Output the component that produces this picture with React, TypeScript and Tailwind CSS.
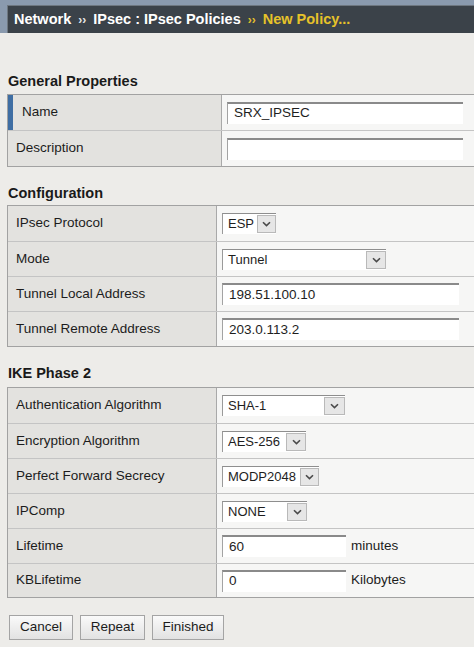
import type { ReactNode } from 'react';

const font = { fontFamily: '"Liberation Sans", Arial, sans-serif' };

function Chevron() {
  return (
    <svg width="9" height="6" viewBox="0 0 9 6" className="block">
      <path d="M1 1.2 L4.5 4.6 L8 1.2" fill="none" stroke="#4a4a4a" strokeWidth="1.6" />
    </svg>
  );
}

function Select({ value, width, arrowLeft }: { value: string; width: number; arrowLeft: number }) {
  return (
    <div
      className="flex h-[21px] bg-white border-t border-l border-t-[#8e8e8e] border-l-[#9a9a9a]"
      style={{ width }}
    >
      <div className="flex items-center pl-[5px] text-[13px] text-[#1e1e1e]" style={{ width: arrowLeft }}>
        {value}
      </div>
      <div className="flex-1 flex items-center justify-center bg-[#e6e6e6] border border-[#b9b9b9] mt-[1px] mb-[1px]">
        <Chevron />
      </div>
    </div>
  );
}

function TextInput({ value, width }: { value: string; width: number }) {
  return (
    <div
      className="flex items-center h-[22px] bg-white border-t-2 border-l border-t-[#8a8a8a] border-l-[#a3a3a3] pl-[6px] text-[13.5px] text-[#1e1e1e]"
      style={{ width }}
    >
      {value}
    </div>
  );
}

function Row({
  label,
  labelWidth,
  height,
  first,
  marker,
  children,
}: {
  label: string;
  labelWidth: number;
  height: number;
  first?: boolean;
  marker?: boolean;
  children: ReactNode;
}) {
  return (
    <div className={`flex ${first ? '' : 'border-t border-[#c4c4c4]'}`} style={{ height }}>
      <div
        className="flex items-center bg-[#e3e2df] border-r border-[#a9a9a9] text-[13.5px] text-[#1c1c1c]"
        style={{ width: labelWidth }}
      >
        {marker ? (
          <>
            <div className="w-[5px] self-stretch bg-[#3f6ea3]" />
            <span className="pl-[9px]">{label}</span>
          </>
        ) : (
          <span className="pl-[8px]">{label}</span>
        )}
      </div>
      <div className="flex-1 flex items-center gap-[5px] pl-[5px] bg-[#f6f6f5]">{children}</div>
    </div>
  );
}

function Heading({ children }: { children: ReactNode }) {
  return <div className="h-[16px] leading-[16px] pl-[1px] text-[14.5px] font-bold text-[#1a1a1a]">{children}</div>;
}

function Button({ children, width }: { children: ReactNode; width: number }) {
  return (
    <button
      className="h-[25px] border border-[#a4a4a4] bg-gradient-to-b from-[#fafafa] to-[#e2e2e2] text-[13.5px] text-[#1c1c1c]"
      style={{ width, ...font }}
    >
      {children}
    </button>
  );
}

export default function App() {
  return (
    <div className="w-[474px] h-[647px] overflow-hidden bg-[#edece9]" style={font}>
      {/* breadcrumb bar */}
      <div className="h-[33px] bg-[#8a9aae] pl-[7px] pt-[5px]">
        <div className="h-full flex items-center pl-[6px] bg-[#3b4249] border-t border-l border-[#6e7780] text-[14.5px] font-bold text-white whitespace-nowrap">
          <span>Network</span>
          <span className="mx-[7px] text-[12px] text-[#e8e8e8]">››</span>
          <span>IPsec : IPsec Policies</span>
          <span className="mx-[7px] text-[12px] text-[#e2c02c]">››</span>
          <span className="text-[#e6c22a]">New Policy...</span>
        </div>
      </div>

      <div className="pl-[7px]">
        <div className="mt-[40px]">
          <Heading>General Properties</Heading>
        </div>
        <div className="mt-[5px] border border-[#a2a2a2] border-r-0">
          <Row label="Name" labelWidth={214} height={35} first marker>
            <TextInput value="SRX_IPSEC" width={236} />
          </Row>
          <Row label="Description" labelWidth={214} height={36}>
            <TextInput value="" width={236} />
          </Row>
        </div>

        <div className="mt-[18px]">
          <Heading>Configuration</Heading>
        </div>
        <div className="mt-[4px] border border-[#a2a2a2] border-r-0">
          <Row label="IPsec Protocol" labelWidth={209} height={35} first>
            <Select value="ESP" width={54} arrowLeft={34} />
          </Row>
          <Row label="Mode" labelWidth={209} height={35}>
            <Select value="Tunnel" width={164} arrowLeft={143} />
          </Row>
          <Row label="Tunnel Local Address" labelWidth={209} height={35}>
            <TextInput value="198.51.100.10" width={237} />
          </Row>
          <Row label="Tunnel Remote Address" labelWidth={209} height={35}>
            <TextInput value="203.0.113.2" width={237} />
          </Row>
        </div>

        <div className="mt-[18px]">
          <Heading>IKE Phase 2</Heading>
        </div>
        <div className="mt-[6px] border border-[#a2a2a2] border-r-0">
          <Row label="Authentication Algorithm" labelWidth={209} height={35} first>
            <Select value="SHA-1" width={123} arrowLeft={101} />
          </Row>
          <Row label="Encryption Algorithm" labelWidth={209} height={35}>
            <Select value="AES-256" width={84} arrowLeft={63} />
          </Row>
          <Row label="Perfect Forward Secrecy" labelWidth={209} height={35}>
            <Select value="MODP2048" width={97} arrowLeft={77} />
          </Row>
          <Row label="IPComp" labelWidth={209} height={35}>
            <Select value="NONE" width={85} arrowLeft={64} />
          </Row>
          <Row label="Lifetime" labelWidth={209} height={35}>
            <TextInput value="60" width={124} />
            <span className="text-[13.5px] text-[#1c1c1c]">minutes</span>
          </Row>
          <Row label="KBLifetime" labelWidth={209} height={34}>
            <TextInput value="0" width={124} />
            <span className="text-[13.5px] text-[#1c1c1c]">Kilobytes</span>
          </Row>
        </div>

        <div className="mt-[17px] flex gap-[7px] pl-[2px]">
          <Button width={64}>Cancel</Button>
          <Button width={65}>Repeat</Button>
          <Button width={72}>Finished</Button>
        </div>
      </div>
    </div>
  );
}
